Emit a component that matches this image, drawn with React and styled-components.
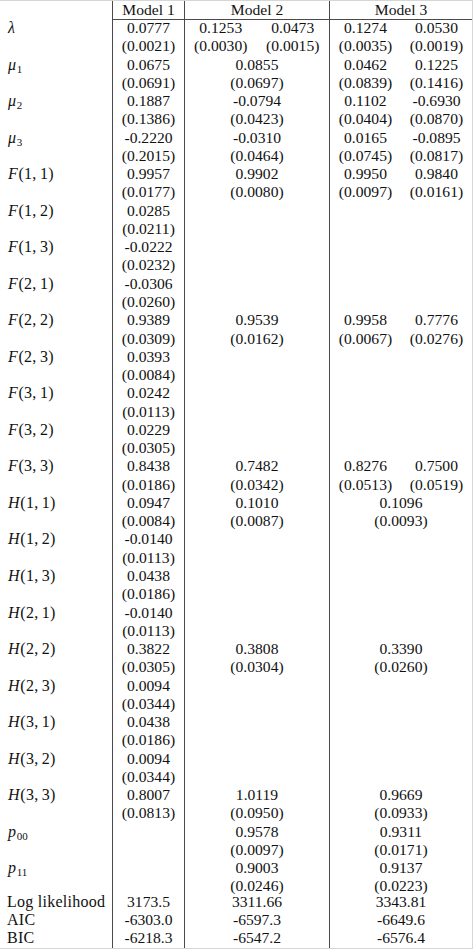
import React from "react";
import styled, { createGlobalStyle } from "styled-components";

const GlobalStyle = createGlobalStyle`
  html, body { margin: 0; padding: 0; background: #ffffff; }
  body {
    font-family: "Liberation Serif", "Times New Roman", serif;
    color: #111111;
  }
`;

const LINE = "#4a4a4a";
const FAINT = "#d6d6d6";
const COLS = "112px 72px 72.5px 72.5px 72px 72px";

const Frame = styled.div`
  width: 473px;
  border-top: 1px solid ${FAINT};
  border-bottom: 1px solid ${FAINT};
  font-size: 15.6px;
`;

const Row = styled.div`
  display: grid;
  grid-template-columns: ${COLS};
  height: ${(p) => p.$h}px;
  line-height: ${(p) => p.$h}px;
  margin-top: ${(p) => (p.$pull ? -p.$pull : 0)}px;
`;

const Cell = styled.div`
  grid-column: span ${(p) => p.$span || 1};
  text-align: center;
  white-space: nowrap;
  border-left: ${(p) => (p.$edge ? `1px solid ${LINE}` : "none")};
  border-right: ${(p) => (p.$last ? `1px solid ${FAINT}` : "none")};
  border-bottom: ${(p) => (p.$rule ? `1px solid ${LINE}` : "none")};
  box-sizing: border-box;
`;

const Label = styled.div`
  padding-left: 7px;
  text-align: left;
  white-space: nowrap;
  font-size: 16px;
  letter-spacing: 0.25px;
`;

const Var = styled.span`
  font-style: italic;
  margin-left: 1px;
  margin-right: 0.5px;
`;

const Sub = styled.sub`
  font-size: 11px;
  vertical-align: -3px;
  line-height: 0;
  letter-spacing: 0;
`;

const mu = (n) => (
  <>
    <Var>μ</Var>
    <Sub>{n}</Sub>
  </>
);
const fn = (L, i, j) => (
  <>
    <Var>{L}</Var>({i},{"\u2009"}{j})
  </>
);
const p = (n) => (
  <>
    <Var>p</Var>
    <Sub>{n}</Sub>
  </>
);

// each param: label, m1 [v, se], m2 / m3: null | [v, se] (span) | [[v,se],[v,se]] (split)
const params = [
  { label: <Var>λ</Var>, m1: ["0.0777", "(0.0021)"], m2: [["0.1253", "(0.0030)"], ["0.0473", "(0.0015)"]], m3: [["0.1274", "(0.0035)"], ["0.0530", "(0.0019)"]] },
  { label: mu(1), m1: ["0.0675", "(0.0691)"], m2: ["0.0855", "(0.0697)"], m3: [["0.0462", "(0.0839)"], ["0.1225", "(0.1416)"]] },
  { label: mu(2), m1: ["0.1887", "(0.1386)"], m2: ["-0.0794", "(0.0423)"], m3: [["0.1102", "(0.0404)"], ["-0.6930", "(0.0870)"]] },
  { label: mu(3), m1: ["-0.2220", "(0.2015)"], m2: ["-0.0310", "(0.0464)"], m3: [["0.0165", "(0.0745)"], ["-0.0895", "(0.0817)"]] },
  { label: fn("F", 1, 1), m1: ["0.9957", "(0.0177)"], m2: ["0.9902", "(0.0080)"], m3: [["0.9950", "(0.0097)"], ["0.9840", "(0.0161)"]] },
  { label: fn("F", 1, 2), m1: ["0.0285", "(0.0211)"] },
  { label: fn("F", 1, 3), m1: ["-0.0222", "(0.0232)"] },
  { label: fn("F", 2, 1), m1: ["-0.0306", "(0.0260)"] },
  { label: fn("F", 2, 2), m1: ["0.9389", "(0.0309)"], m2: ["0.9539", "(0.0162)"], m3: [["0.9958", "(0.0067)"], ["0.7776", "(0.0276)"]] },
  { label: fn("F", 2, 3), m1: ["0.0393", "(0.0084)"] },
  { label: fn("F", 3, 1), m1: ["0.0242", "(0.0113)"] },
  { label: fn("F", 3, 2), m1: ["0.0229", "(0.0305)"] },
  { label: fn("F", 3, 3), m1: ["0.8438", "(0.0186)"], m2: ["0.7482", "(0.0342)"], m3: [["0.8276", "(0.0513)"], ["0.7500", "(0.0519)"]] },
  { label: fn("H", 1, 1), m1: ["0.0947", "(0.0084)"], m2: ["0.1010", "(0.0087)"], m3: ["0.1096", "(0.0093)"] },
  { label: fn("H", 1, 2), m1: ["-0.0140", "(0.0113)"] },
  { label: fn("H", 1, 3), m1: ["0.0438", "(0.0186)"] },
  { label: fn("H", 2, 1), m1: ["-0.0140", "(0.0113)"] },
  { label: fn("H", 2, 2), m1: ["0.3822", "(0.0305)"], m2: ["0.3808", "(0.0304)"], m3: ["0.3390", "(0.0260)"] },
  { label: fn("H", 2, 3), m1: ["0.0094", "(0.0344)"] },
  { label: fn("H", 3, 1), m1: ["0.0438", "(0.0186)"] },
  { label: fn("H", 3, 2), m1: ["0.0094", "(0.0344)"] },
  { label: fn("H", 3, 3), m1: ["0.8007", "(0.0813)"], m2: ["1.0119", "(0.0950)"], m3: ["0.9669", "(0.0933)"] },
  { label: p("00"), m1: null, m2: ["0.9578", "(0.0097)"], m3: ["0.9311", "(0.0171)"] },
  { label: p("11"), m1: null, m2: ["0.9003", "(0.0246)"], m3: ["0.9137", "(0.0223)"] },
];

const stats = [
  ["Log likelihood", "3173.5", "3311.66", "3343.81"],
  ["AIC", "-6303.0", "-6597.3", "-6649.6"],
  ["BIC", "-6218.3", "-6547.2", "-6576.4"],
];

const H = 18.27;

function ModelCells({ data, k, last }) {
  if (data && Array.isArray(data[0])) {
    return (
      <>
        <Cell $edge>{data[0][k]}</Cell>
        <Cell $last={last}>{data[1][k]}</Cell>
      </>
    );
  }
  return (
    <Cell $edge $span={2} $last={last}>
      {data ? data[k] : ""}
    </Cell>
  );
}

function ParamLines({ item }) {
  return [0, 1].map((k) => (
    <Row key={k} $h={H}>
      <Label>{k === 0 ? item.label : ""}</Label>
      <Cell $edge>{item.m1 ? item.m1[k] : ""}</Cell>
      <ModelCells data={item.m2} k={k} />
      <ModelCells data={item.m3} k={k} last />
    </Row>
  ));
}

export default function App() {
  return (
    <>
      <GlobalStyle />
      <Frame>
        <Row $h={18}>
          <Label />
          <Cell $edge $rule>Model 1</Cell>
          <Cell $edge $rule $span={2}>Model 2</Cell>
          <Cell $edge $rule $span={2} $last>Model 3</Cell>
        </Row>
        {params.map((item, i) => (
          <ParamLines key={i} item={item} />
        ))}
        {stats.map((s, i) => (
          <Row key={s[0]} $h={H} $pull={i === 0 ? 3 : 0}>
            <Label>{s[0]}</Label>
            <Cell $edge>{s[1]}</Cell>
            <Cell $edge $span={2}>{s[2]}</Cell>
            <Cell $edge $span={2} $last>{s[3]}</Cell>
          </Row>
        ))}
      </Frame>
    </>
  );
}
